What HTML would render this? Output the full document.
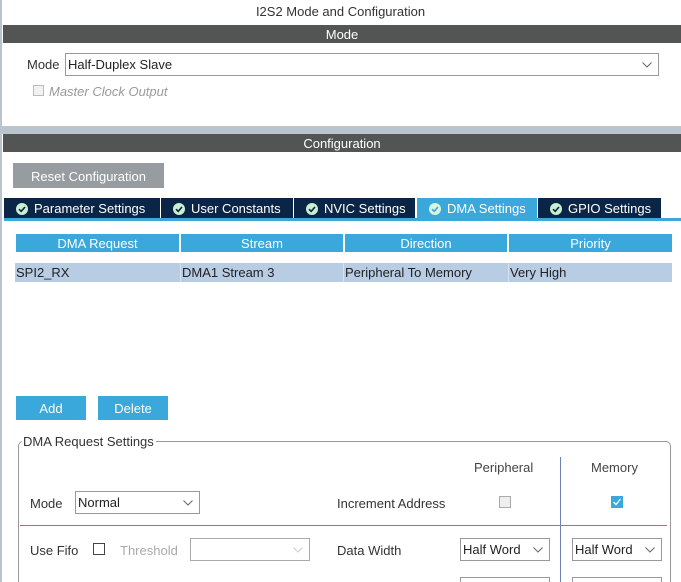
<!DOCTYPE html>
<html style="width:681px;height:582px;overflow:hidden"><head><meta charset="utf-8"><style>
*{box-sizing:border-box;margin:0;padding:0}
body{width:681px;height:582px;overflow:hidden;background:#fff;font-family:"Liberation Sans",sans-serif;font-size:13px;color:#333;position:relative}
.a{position:absolute;white-space:nowrap}
.bar{position:absolute;left:3px;right:0;height:18px;background:#535554;color:#fff;text-align:center;line-height:19px;font-size:13px}
.sel{position:absolute;border:1px solid #999;background:#fff;height:23px;line-height:22px;padding-left:2px;color:#222}
.sel svg{position:absolute;right:6px;top:8px}
.tab{position:absolute;top:198px;height:20px;background:#0b2547;color:#fff;line-height:21px;font-size:13px;padding-left:12px}
.tab svg{vertical-align:-2px;margin-right:6px}
.th{position:absolute;top:234px;height:18px;background:#3aa8db;color:#fff;text-align:center;line-height:19px}
.td{position:absolute;top:263px;height:19px;background:#b8cce4;line-height:20px;padding-left:1px;color:#222}
.btn{position:absolute;background:#3aa8db;color:#fff;text-align:center;height:24px;line-height:25px}
</style></head><body>
<div class="a" style="left:0;top:0;width:2px;height:582px;background:#b9c4cc"></div>
<div class="a" style="left:0;top:4px;width:681px;text-align:center;font-size:13px;color:#333">I2S2 Mode and Configuration</div>
<div class="bar" style="top:25px">Mode</div>
<div class="a" style="left:27px;top:57px">Mode</div>
<div class="sel" style="left:65px;top:53px;width:594px">Half-Duplex Slave<svg width="10" height="6"><path d="M0.5 0.5L5 5L9.5 0.5" stroke="#666" fill="none"/></svg></div>
<div class="a" style="left:33px;top:85px;width:11px;height:11px;border:1px solid #bbb;background:#f2f2f2"></div>
<div class="a" style="left:49px;top:84px;color:#999;font-style:italic">Master Clock Output</div>
<div class="a" style="left:0;top:126px;width:681px;height:8px;background:#b9c4cc"></div>
<div class="bar" style="top:134px">Configuration</div>
<div class="a" style="left:13px;top:163px;width:151px;height:25px;background:#969ca0;color:#fff;text-align:center;line-height:27px">Reset Configuration</div>
<div class="tab" style="left:4px;width:156px;padding-left:12px"><svg width="12" height="12"><circle cx="6" cy="6" r="6" fill="#c9f0d2"/><path d="M3 6.2L5.2 8.3L9 4" stroke="#0b2547" stroke-width="1.6" fill="none"/></svg>Parameter Settings</div>
<div class="tab" style="left:161px;width:132px"><svg width="12" height="12"><circle cx="6" cy="6" r="6" fill="#c9f0d2"/><path d="M3 6.2L5.2 8.3L9 4" stroke="#0b2547" stroke-width="1.6" fill="none"/></svg>User Constants</div>
<div class="tab" style="left:294px;width:121px"><svg width="12" height="12"><circle cx="6" cy="6" r="6" fill="#c9f0d2"/><path d="M3 6.2L5.2 8.3L9 4" stroke="#0b2547" stroke-width="1.6" fill="none"/></svg>NVIC Settings</div>
<div class="tab" style="left:417px;width:120px;background:#3aa8db"><svg width="12" height="12"><circle cx="6" cy="6" r="6" fill="#d8f5e0"/><path d="M3 6.2L5.2 8.3L9 4" stroke="#3aa8db" stroke-width="1.6" fill="none"/></svg>DMA Settings</div>
<div class="tab" style="left:538px;width:123px"><svg width="12" height="12"><circle cx="6" cy="6" r="6" fill="#c9f0d2"/><path d="M3 6.2L5.2 8.3L9 4" stroke="#0b2547" stroke-width="1.6" fill="none"/></svg>GPIO Settings</div>
<div class="a" style="left:4px;top:218px;width:677px;height:3px;background:#3aa8db"></div>
<div class="th" style="left:16px;width:163px">DMA Request</div>
<div class="th" style="left:181px;width:162px">Stream</div>
<div class="th" style="left:345px;width:162px">Direction</div>
<div class="th" style="left:509px;width:163px">Priority</div>
<div class="td" style="left:15px;width:165px">SPI2_RX</div>
<div class="td" style="left:180px;width:164px;border-left:1px solid #d8e2ee">DMA1 Stream 3</div>
<div class="td" style="left:343px;width:166px;border-left:1px solid #d8e2ee">Peripheral To Memory</div>
<div class="td" style="left:508px;width:164px;border-left:1px solid #d8e2ee">Very High</div>
<div class="btn" style="left:16px;top:396px;width:70px">Add</div>
<div class="btn" style="left:98px;top:396px;width:70px">Delete</div>
<div class="a" style="left:18px;top:441px;width:653px;height:160px;border:1px solid #999;border-radius:5px"></div>
<div class="a" style="left:22px;top:434px;background:#fff;padding:0 2px 0 1px">DMA Request Settings</div>
<div class="a" style="left:560px;top:457px;width:1px;height:130px;background:#6a82b8"></div>
<div class="a" style="left:20px;top:525px;width:647px;height:1px;background:#6a82b8"></div>
<div class="a" style="left:474px;top:460px;color:#444">Peripheral</div>
<div class="a" style="left:591px;top:460px;color:#444">Memory</div>
<div class="a" style="left:30px;top:496px">Mode</div>
<div class="sel" style="left:75px;top:491px;width:125px">Normal<svg width="10" height="6"><path d="M0.5 0.5L5 5L9.5 0.5" stroke="#666" fill="none"/></svg></div>
<div class="a" style="left:337px;top:496px">Increment Address</div>
<div class="a" style="left:499px;top:496px;width:12px;height:12px;border:1px solid #aaa;background:#eee"></div>
<div class="a" style="left:611px;top:496px;width:12px;height:12px;background:#3aa8db"><svg width="12" height="12" style="position:absolute;left:0;top:0"><path d="M2.5 6L5 8.5L9.5 3" stroke="#fff" stroke-width="1.3" fill="none"/></svg></div>
<div class="a" style="left:30px;top:543px">Use Fifo</div>
<div class="a" style="left:93px;top:543px;width:12px;height:12px;border:1px solid #444;background:#fff"></div>
<div class="a" style="left:120px;top:543px;color:#aaa">Threshold</div>
<div class="sel" style="left:190px;top:538px;width:120px;border-color:#aaa"><svg width="10" height="6"><path d="M0.5 0.5L5 5L9.5 0.5" stroke="#ccc" fill="none"/></svg></div>
<div class="a" style="left:337px;top:543px">Data Width</div>
<div class="sel" style="left:460px;top:538px;width:90px">Half Word<svg width="10" height="6"><path d="M0.5 0.5L5 5L9.5 0.5" stroke="#666" fill="none"/></svg></div>
<div class="sel" style="left:572px;top:538px;width:90px">Half Word<svg width="10" height="6"><path d="M0.5 0.5L5 5L9.5 0.5" stroke="#666" fill="none"/></svg></div>
<div class="sel" style="left:460px;top:577px;width:90px"></div>
<div class="sel" style="left:572px;top:577px;width:90px"></div>
</body></html>
